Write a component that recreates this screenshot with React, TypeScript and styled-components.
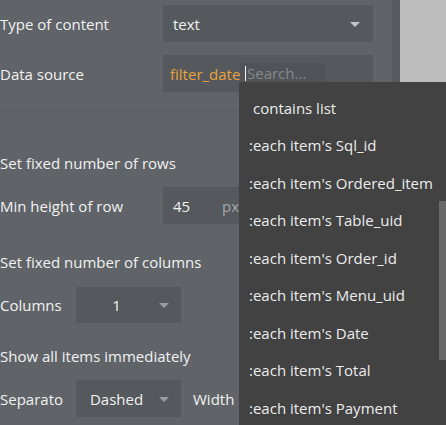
import React from "react";
import styled, { createGlobalStyle } from "styled-components";

const Global = createGlobalStyle`
  html, body { margin: 0; padding: 0; width: 446px; height: 425px; overflow: hidden; }
  body { font-family: "Open Sans", "Liberation Sans", sans-serif; font-size: 15px; background: #606468; }
`;

const Screen = styled.div`
  position: relative;
  display: flex;
  width: 446px;
  height: 425px;
  overflow: hidden;
`;

const Panel = styled.div`
  width: 392px;
  flex: none;
  background: #606468;
  display: flex;
  flex-direction: column;
`;

const PanelTrack = styled.div`
  width: 8px;
  flex: none;
  background: #56595d;
`;

const Canvas = styled.div`
  flex: 1;
  background: #bebebe;
`;

const Row = styled.div<{ $mt: number; $h?: number }>`
  display: flex;
  align-items: center;
  margin-top: ${(p) => p.$mt}px;
  height: ${(p) => p.$h ?? 37}px;
  flex: none;
`;

const Label = styled.div<{ $w?: number }>`
  width: ${(p) => (p.$w ? `${p.$w}px` : "auto")};
  flex: none;
  color: #f1f1f1;
  font-size: 15px;
  white-space: nowrap;
`;

const Divider = styled.div`
  margin-top: 18px;
  height: 1px;
  background: #585c60;
  flex: none;
`;

const Box = styled.div<{ $w: number; $center?: boolean }>`
  position: relative;
  width: ${(p) => p.$w}px;
  height: 100%;
  flex: none;
  background: #55595d;
  display: flex;
  align-items: center;
  box-sizing: border-box;
  padding: ${(p) => (p.$center ? "0 24px 0 0" : "0 0 0 10px")};
  justify-content: ${(p) => (p.$center ? "center" : "flex-start")};
  color: #f1f1f1;
  font-size: 15px;
`;

const Arrow = styled.span<{ $dim?: boolean }>`
  position: absolute;
  right: ${(p) => (p.$dim ? 12 : 13)}px;
  top: 50%;
  margin-top: -2px;
  width: 0;
  height: 0;
  border-left: 5px solid transparent;
  border-right: 5px solid transparent;
  border-top: 5px solid ${(p) => (p.$dim ? "#9a9da0" : "#c2c4c6")};
`;

const Orange = styled.span`
  color: #e9a23b;
  padding-left: 7px;
`;

const Unit = styled.span`
  position: absolute;
  left: 59px;
  color: #a6a9ac;
`;

const Spacer = styled.div<{ $w: number }>`
  width: ${(p) => p.$w}px;
  flex: none;
`;

const Search = styled.div`
  position: absolute;
  left: 240px;
  top: 63px;
  width: 85px;
  height: 19px;
  background: #505357;
  display: flex;
  align-items: center;
  color: #86898c;
  font-size: 15px;
  padding-left: 7px;
  box-sizing: border-box;
  overflow: hidden;
  white-space: nowrap;
`;

const Caret = styled.span`
  position: absolute;
  left: 5px;
  top: 3px;
  width: 1px;
  height: 15px;
  background: #f2f2f2;
`;

const Menu = styled.div`
  position: absolute;
  left: 239px;
  top: 82px;
  width: 207px;
  height: 360px;
  background: #424242;
  padding-top: 7px;
  box-sizing: border-box;
`;

const Item = styled.div<{ $indent: number }>`
  height: 37.5px;
  display: flex;
  align-items: center;
  padding-left: ${(p) => p.$indent}px;
  color: #ececec;
  font-size: 15px;
  white-space: nowrap;
`;

const Thumb = styled.div`
  position: absolute;
  right: 0;
  top: 119px;
  width: 7px;
  height: 159px;
  background: #686868;
`;

const items = [
  "Sql_id",
  "Ordered_item",
  "Table_uid",
  "Order_id",
  "Menu_uid",
  "Date",
  "Total",
  "Payment",
];

export default function App() {
  return (
    <Screen>
      <Global />
      <Panel>
        <Row $mt={5}>
          <Label $w={163}>Type of content</Label>
          <Box $w={210}>
            text
            <Arrow />
          </Box>
        </Row>
        <Row $mt={13}>
          <Label $w={163}>Data source</Label>
          <Box $w={210} style={{ paddingLeft: 0 }}>
            <Orange>filter_date</Orange>
          </Box>
        </Row>
        <Divider />
        <Row $mt={40} $h={24}>
          <Label>Set fixed number of rows</Label>
        </Row>
        <Row $mt={12}>
          <Label $w={163}>Min height of row</Label>
          <Box $w={76}>
            45
            <Unit>px</Unit>
          </Box>
        </Row>
        <Row $mt={26} $h={24}>
          <Label>Set fixed number of columns</Label>
        </Row>
        <Row $mt={13} $h={36}>
          <Label $w={76}>Columns</Label>
          <Box $w={105} $center>
            1
            <Arrow $dim />
          </Box>
        </Row>
        <Row $mt={21} $h={24}>
          <Label>Show all items immediately</Label>
        </Row>
        <Row $mt={12}>
          <Label $w={76}>Separato</Label>
          <Box $w={105} $center>
            Dashed
            <Arrow $dim />
          </Box>
          <Spacer $w={12} />
          <Label>Width</Label>
        </Row>
      </Panel>
      <PanelTrack />
      <Canvas />
      <Search>
        <Caret />
        Search...
      </Search>
      <Menu>
        <Item $indent={14}>contains list</Item>
        {items.map((it) => (
          <Item key={it} $indent={10}>
            :each item's {it}
          </Item>
        ))}
        <Thumb />
      </Menu>
    </Screen>
  );
}
